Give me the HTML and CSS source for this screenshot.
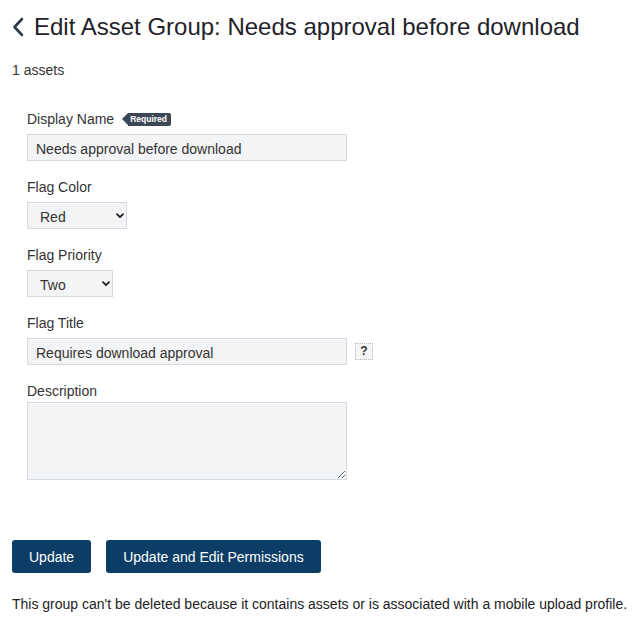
FILE: index.html
```html
<!DOCTYPE html>
<html>
<head>
<meta charset="utf-8">
<link rel="stylesheet" href="styles.css">
</head>
<body>
<div class="page">
  <h1 class="title">
    <svg class="back" width="12" height="20" viewBox="0 0 12 20"><path d="M10 2 L2.5 10 L10 18" fill="none" stroke="#2f3a48" stroke-width="2.6" stroke-linecap="round" stroke-linejoin="round"/></svg>
    <span>Edit Asset Group: Needs approval before download</span>
  </h1>
  <p class="count">1 assets</p>

  <form class="form">
    <div class="field">
      <label class="label">Display Name <span class="badge">Required</span></label>
      <input class="input" type="text" value="Needs approval before download">
    </div>
    <div class="field">
      <label class="label">Flag Color</label>
      <span class="select-wrap color-sel">
        <select class="select"><option>Red</option></select>
        <svg class="caret" width="8" height="6" viewBox="0 0 8 6"><path d="M1 1.2 L4 4.2 L7 1.2" fill="none" stroke="#222" stroke-width="1.8" stroke-linecap="round" stroke-linejoin="round"/></svg>
      </span>
    </div>
    <div class="field">
      <label class="label">Flag Priority</label>
      <span class="select-wrap prio-sel">
        <select class="select"><option>Two</option></select>
        <svg class="caret" width="8" height="6" viewBox="0 0 8 6"><path d="M1 1.2 L4 4.2 L7 1.2" fill="none" stroke="#222" stroke-width="1.8" stroke-linecap="round" stroke-linejoin="round"/></svg>
      </span>
    </div>
    <div class="field">
      <label class="label">Flag Title</label>
      <div class="row">
        <input class="input" type="text" value="Requires download approval">
        <span class="help">?</span>
      </div>
    </div>
    <div class="field">
      <label class="label tight">Description</label>
      <textarea class="textarea"></textarea>
    </div>
  </form>

  <div class="actions">
    <button class="btn" type="button">Update</button>
    <button class="btn" type="button">Update and Edit Permissions</button>
  </div>
  <p class="note">This group can't be deleted because it contains assets or is associated with a mobile upload profile.</p>
</div>
</body>
</html>
```

FILE: styles.css
```css
* { box-sizing: border-box; }
html, body { margin: 0; padding: 0; background: #fff; }
body {
  font-family: "Liberation Sans", Arial, Helvetica, sans-serif;
  color: #333;
  font-size: 14px;
}
.page { padding: 0 12px; }
.title {
  margin: 0;
  padding-top: 10px;
  display: flex;
  align-items: center;
  gap: 10px;
  font-size: 24px;
  line-height: 34px;
  font-weight: normal;
  color: #1f2329;
}
.back { display: block; margin-left: 0; }
.count {
  margin: 18px 0 0;
  font-size: 14px;
  line-height: 16px;
  color: #333;
}
.form {
  margin-top: 32px;
  padding-left: 15px;
}
.field { margin-bottom: 17px; }
.label {
  display: flex;
  align-items: center;
  gap: 8px;
  font-size: 14px;
  line-height: 18px;
  color: #333;
  margin-bottom: 6px;
}
.label.tight { margin-bottom: 2px; }
.badge {
  display: inline-flex;
  align-items: center;
  height: 13px;
  padding: 0 4px 0 2px;
  margin-left: 6px;
  background: #3d4756;
  color: #fff;
  font-size: 8.5px;
  font-weight: bold;
  line-height: 13px;
  border-radius: 0 2px 2px 0;
  position: relative;
}
.badge::before {
  content: "";
  position: absolute;
  left: -6px;
  top: 0;
  border-top: 6.5px solid transparent;
  border-bottom: 6.5px solid transparent;
  border-right: 6px solid #3d4756;
}
.input {
  display: block;
  width: 320px;
  height: 27px;
  border: 1px solid #d6dae0;
  background: #f3f4f6;
  padding: 2px 8px 0;
  font-family: inherit;
  font-size: 14px;
  color: #333;
  border-radius: 0;
  outline: none;
}
.row { display: flex; align-items: center; gap: 8px; }
.help {
  display: inline-flex;
  align-items: center;
  justify-content: center;
  width: 18px;
  height: 17px;
  margin-top: -1px;
  border: 1px dotted #b8b8b8;
  background: #f5f5f5;
  font-size: 12px;
  font-weight: bold;
  color: #333;
}
.select-wrap {
  position: relative;
  display: inline-block;
  height: 27px;
}
.color-sel { width: 100px; }
.prio-sel { width: 86px; }
.select {
  -webkit-appearance: none;
  appearance: none;
  width: 100%;
  height: 27px;
  border: 1px solid #d6dae0;
  background: #f3f4f6;
  padding: 2px 0 0 12px;
  font-family: inherit;
  font-size: 14px;
  color: #333;
  border-radius: 0;
  outline: none;
}
.caret {
  position: absolute;
  right: 3px;
  top: 11px;
  pointer-events: none;
}
.textarea {
  display: block;
  width: 320px;
  height: 78px;
  border: 1px solid #d6dae0;
  background: #f3f4f6;
  border-radius: 0;
  font-family: inherit;
  font-size: 14px;
  margin: 0;
  outline: none;
}
.form .field:last-child { margin-bottom: 0; }
.actions {
  margin-top: 60px;
  display: flex;
  gap: 15px;
}
.btn {
  height: 33px;
  padding: 0 17px;
  border: none;
  border-radius: 3px;
  background: #0b3d66;
  color: #fff;
  font-family: inherit;
  font-size: 14px;
}
.note {
  margin: 23px 0 0;
  font-size: 14px;
  line-height: 16px;
  color: #222;
}
```
